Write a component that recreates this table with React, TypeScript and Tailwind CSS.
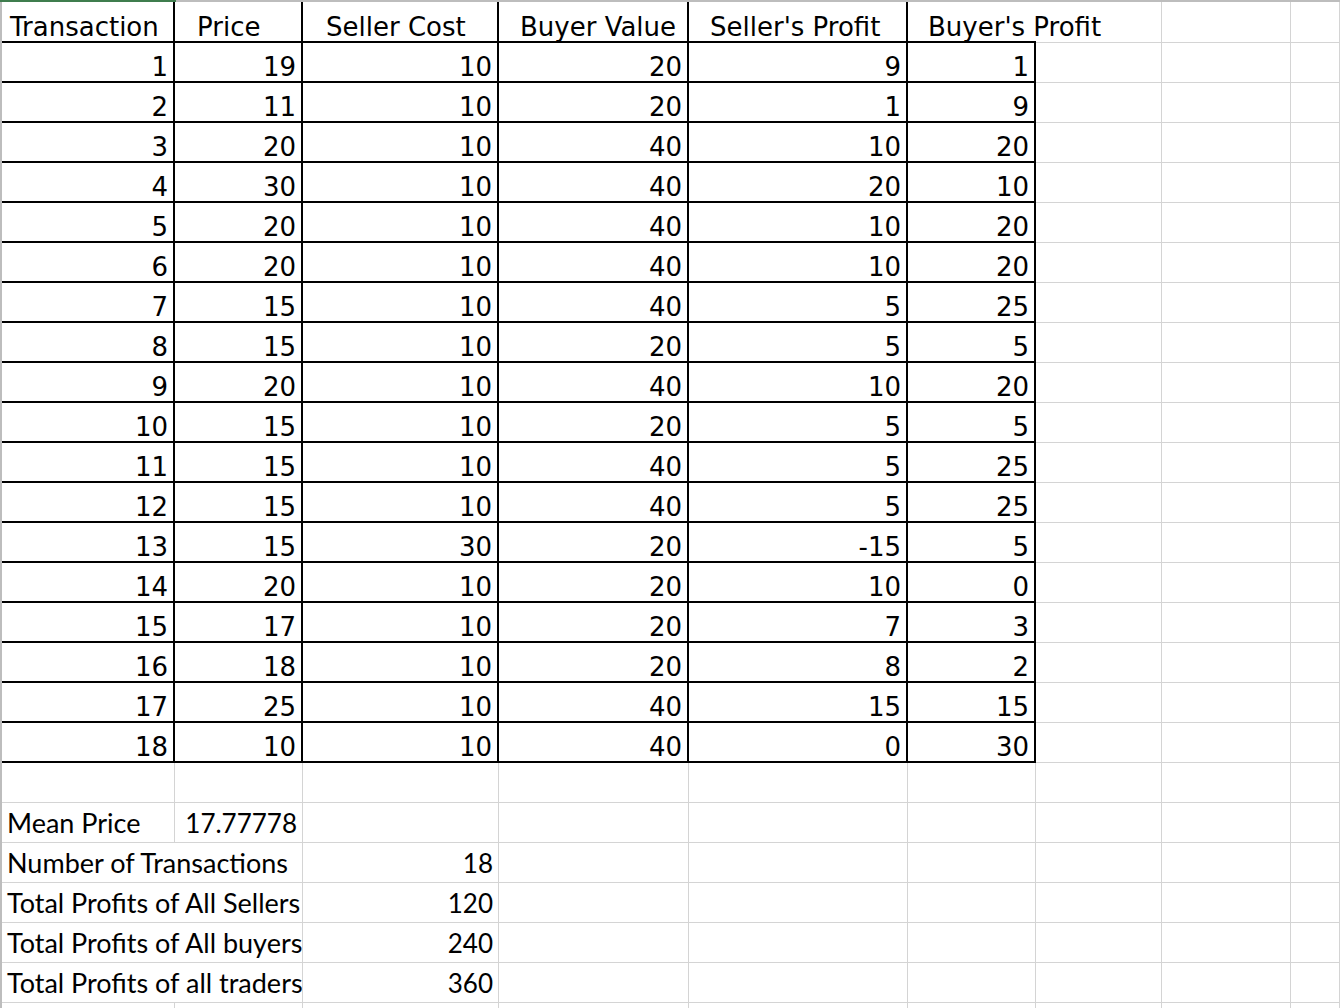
import React from "react";

const data: number[][] = [
  [1, 19, 10, 20, 9, 1],
  [2, 11, 10, 20, 1, 9],
  [3, 20, 10, 40, 10, 20],
  [4, 30, 10, 40, 20, 10],
  [5, 20, 10, 40, 10, 20],
  [6, 20, 10, 40, 10, 20],
  [7, 15, 10, 40, 5, 25],
  [8, 15, 10, 20, 5, 5],
  [9, 20, 10, 40, 10, 20],
  [10, 15, 10, 20, 5, 5],
  [11, 15, 10, 40, 5, 25],
  [12, 15, 10, 40, 5, 25],
  [13, 15, 30, 20, -15, 5],
  [14, 20, 10, 20, 10, 0],
  [15, 17, 10, 20, 7, 3],
  [16, 18, 10, 20, 8, 2],
  [17, 25, 10, 40, 15, 15],
  [18, 10, 10, 40, 0, 30],
];

const blk = "box-border h-[40px] border-r-2 border-b-2 border-black";
const gry = "box-border h-[40px] border-r border-b border-[#d4d4d4]";
const num =
  "text-right pr-[5px] pt-[9px] leading-[30px] whitespace-nowrap font-['DejaVu_Sans',sans-serif] text-[26px] text-black";
const cal =
  "pt-[4px] leading-[32px] whitespace-nowrap font-['Lato',sans-serif] text-[26px] text-black";
const calLabel =
  "pt-[4px] leading-[32px] whitespace-nowrap font-['Lato',sans-serif] text-[27px] text-black";

function GrayTail() {
  return (
    <>
      <div className={gry} />
      <div className={gry} />
      <div className={gry} />
    </>
  );
}

export default function App() {
  const summary: [string, string][] = [
    ["Number of Transactions", "18"],
    ["Total Profits of All Sellers", "120"],
    ["Total Profits of All buyers", "240"],
    ["Total Profits of all traders", "360"],
  ];
  const hdr =
    "box-border h-[41px] pt-[10px] leading-[30px] whitespace-nowrap font-['DejaVu_Sans',sans-serif] text-[26px] text-black";
  return (
    <div className="w-[1340px] h-[1008px] overflow-hidden bg-white flex flex-col">
      <div className="flex h-[2px] shrink-0">
        <div className="w-[176px] bg-[#3f7d4e]" />
        <div className="flex-1 bg-[#bdbdbd]" />
      </div>
      <div className="flex flex-1">
        <div className="w-[2px] shrink-0 bg-[#bdbdbd]" />
        <div className="flex-1 grid grid-cols-[173px_128px_196px_190px_219px_128px_126px_129px_1fr] content-start">
          {/* header */}
          <div className={`${hdr} border-r-2 border-b-2 border-black pl-[8px]`}>Transaction</div>
          <div className={`${hdr} border-r-2 border-b-2 border-black pl-[22px]`}>Price</div>
          <div className={`${hdr} border-r-2 border-b-2 border-black pl-[23px]`}>Seller Cost</div>
          <div className={`${hdr} border-r-2 border-b-2 border-black pl-[21px]`}>Buyer Value</div>
          <div className={`${hdr} border-r-2 border-b-2 border-black pl-[21px]`}>Seller's Profit</div>
          <div className={`${hdr} border-b-2 border-black pl-[20px]`}>Buyer's Profit</div>
          <div className="box-border h-[41px] border-r border-b border-[#d4d4d4]" />
          <div className="box-border h-[41px] border-r border-b border-[#d4d4d4]" />
          <div className="box-border h-[41px] border-r border-b border-[#d4d4d4]" />

          {data.map((row, i) => (
            <React.Fragment key={i}>
              {row.map((v, j) => (
                <div key={j} className={`${blk} ${num}`}>
                  {v}
                </div>
              ))}
              <GrayTail />
            </React.Fragment>
          ))}

          {/* blank row */}
          <div className={gry} />
          <div className={gry} />
          <div className={gry} />
          <div className={gry} />
          <div className={gry} />
          <div className={gry} />
          <GrayTail />

          {/* mean price */}
          <div className={`${gry} ${calLabel} pl-[5px]`}>Mean Price</div>
          <div className={`${gry} ${cal} text-right pr-[5px]`}>17.77778</div>
          <div className={gry} />
          <div className={gry} />
          <div className={gry} />
          <div className={gry} />
          <GrayTail />

          {summary.map(([label, value]) => (
            <React.Fragment key={label}>
              <div className={`${gry} ${calLabel} col-span-2 overflow-hidden pl-[5px]`}>{label}</div>
              <div className={`${gry} ${cal} text-right pr-[5px]`}>{value}</div>
              <div className={gry} />
              <div className={gry} />
              <div className={gry} />
              <GrayTail />
            </React.Fragment>
          ))}

          {/* partial row */}
          <div className={gry} />
          <div className={gry} />
          <div className={gry} />
          <div className={gry} />
          <div className={gry} />
          <div className={gry} />
          <GrayTail />
        </div>
      </div>
    </div>
  );
}
